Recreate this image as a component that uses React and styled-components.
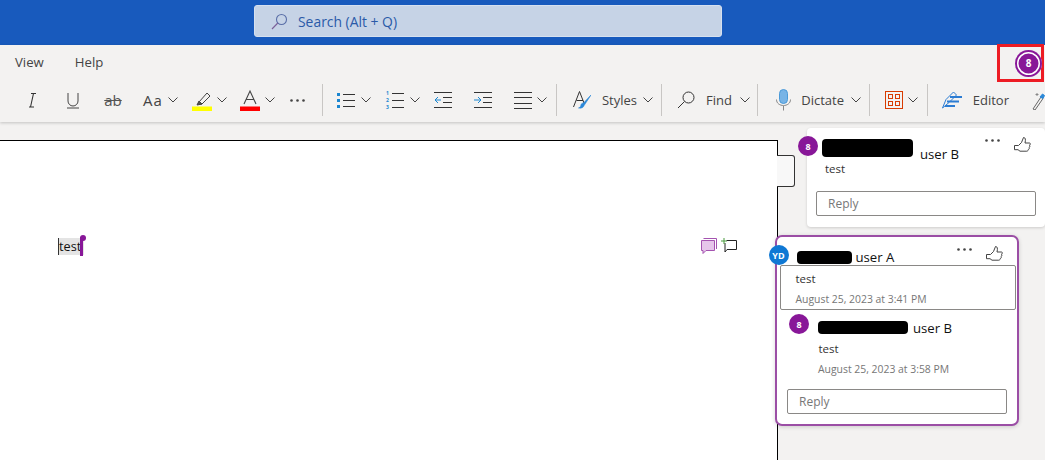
import React from "react";
import styled, { createGlobalStyle } from "styled-components";

const Global = createGlobalStyle`
  html, body { margin: 0; padding: 0; background: #f3f2f1; }
  body { font-family: "Open Sans", "Noto Sans", sans-serif; }
  * { box-sizing: border-box; }
`;
const Shell = styled.div`
  width: 1045px; height: 460px; overflow: hidden; display: flex; flex-direction: column;
  background: #f3f2f1; position: relative;
`;
const Header = styled.header`
  height: 45px; flex: none; background: #185abd; padding: 5px 0 0 254px;
`;
const SearchBox = styled.div`
  width: 468px; height: 32px; background: #c6d3e6; border: 1px solid #d6e0ef; border-radius: 3px;
  display: flex; align-items: center; gap: 10px; padding-left: 16px;
  color: #2a5aa8; font-size: 13.9px;
`;
const Ribbon = styled.div`
  flex: none; height: 77px; background: #f3f2f1; box-shadow: 0 1px 3px rgba(0,0,0,.2); position: relative; z-index: 2;
`;
const MenuRow = styled.nav`
  height: 33px; display: flex; align-items: center; gap: 31px; padding: 0 0 0 15px;
  font-size: 13.2px; color: #444;
`;
const Annotation = styled.div`
  position: absolute; left: 997px; top: -1px; width: 47px; height: 38px; border: 3px solid #ed1c24;
  display: flex; align-items: center; padding: 0 0 0 15px;
`;
const RingAvatar = styled.div`
  flex: none; width: 27px; height: 27px; border-radius: 50%; background: #881798; color: #fff;
  font-size: 10px; font-weight: 700; display: flex; align-items: center; justify-content: center;
  box-shadow: inset 0 0 0 2px #881798, inset 0 0 0 3.5px #fff;
`;
const Toolbar = styled.div`
  height: 44px; display: flex; align-items: center; padding: 0 0 0 12px; font-size: 13px; color: #444;
`;
const Tool = styled.div`
  flex: none; width: ${p => p.$w}px; height: 32px; display: flex; align-items: center;
  justify-content: ${p => p.$end ? "flex-end" : "center"};
  padding: 0 ${p => p.$pr ?? 0}px 0 ${p => p.$pl ?? 0}px;
  gap: ${p => p.$gap ?? 4}px; color: #444; white-space: nowrap;
`;
const CaseLabel = styled.span`
  font-size: 15px; letter-spacing: 1px;
`;
const StrikeLabel = styled.span`
  font-size: 15px; line-height: 18px; color: #555; text-decoration: line-through; text-decoration-thickness: 1px;
`;
const NumberedIcon = styled.div`
  position: relative; width: 18px; height: 21px; flex: none;
`;
const NumberCol = styled.div`
  width: 5px; display: flex; flex-direction: column; color: #1a86d0; font-size: 5px; font-weight: 700;
  & > div { height: 7px; line-height: 7px; }
`;
const NumberLines = styled.svg`
  position: absolute; left: 0; top: 0;
`;
const Sep = styled.div`
  flex: none; width: 1px; height: 32px; background: #c8c6c4; margin: 0 ${p => p.$r ?? 4}px 0 ${p => p.$l ?? 4}px;
`;
const Body = styled.main`
  flex: 1; min-height: 0; display: flex; align-items: flex-start; background: #f3f2f1; padding-top: 18px;
`;
const Page = styled.section`
  flex: none; width: 779px; height: 400px; margin-left: -1px; background: #fff; border: 1px solid #000; border-bottom: 0;
  padding: 95px 40px 0 58px;
`;
const DocLine = styled.div`
  display: flex; justify-content: space-between; align-items: center; height: 20px;
`;
const Selection = styled.span`
  position: relative; display: inline-block; height: 17px; width: 26px; background: #e4e4e4;
  border-left: 1px solid #333; font-size: 12.7px; line-height: 17px; color: #111;
`;
const Presence = styled.span`
  position: absolute; left: 21px; top: -1px; width: 3px; height: 19px; background: #881798;
  &::after { content: ""; position: absolute; left: 0; top: -2px; width: 6px; height: 6px; border-radius: 50%; background: #881798; }
`;
const Marks = styled.div`
  display: flex; gap: 4px; align-items: center; margin-top: 1px;
`;
const PageTab = styled.div`
  flex: none; width: 18px; height: 32px; margin: 15px 0 0 -1px; background: #f8f8f8; border: 1px solid #333; border-left: 0; border-radius: 0 3px 3px 0;
`;
const Pane = styled.aside`
  flex: 1; min-width: 0; margin-top: -12px; display: flex; flex-direction: column; align-items: flex-start; margin-left: -17px;
`;
const Card = styled.article`
  position: relative; width: 238px; height: 99px; margin-left: 29px; background: #fff; border-radius: 4px;
  box-shadow: 0 1px 3px rgba(0,0,0,.16); padding: 8px 9px 0 15px;
`;
const ActiveCard = styled.article`
  position: relative; width: 244px; height: 191px; margin: 8px 0 0 -3px; background: #fff; border: 2.5px solid #9b4ea5; border-radius: 7px;
  box-shadow: 0 1px 4px rgba(0,0,0,.16); padding: 8px 2px 0 1.5px;
`;
const Head = styled.div`
  display: flex; align-items: center; color: #000; font-size: 13.2px; height: 20px;
  padding-left: ${p => p.$p ?? 0}px; margin: ${p => p.$m ?? 0};
`;
const Avatar = styled.div`
  flex: none; width: 20px; height: 20px; border-radius: 50%; background: ${p => p.$bg ?? "#881798"}; color: #fff;
  font-size: 9px; font-weight: 700; display: flex; align-items: center; justify-content: center;
`;
const Redact = styled.span`
  flex: none; display: inline-block; width: ${p => p.$w}px; height: ${p => p.$h}px; background: #000; border-radius: 4px;
  margin: ${p => p.$m};
`;
const Name = styled.span`
  white-space: nowrap; color: #111; line-height: 16px; transform: translateY(${p => p.$y ?? 0}px);
`;
const Actions = styled.div`
  position: absolute; top: ${p => p.$t}px; right: ${p => p.$r}px; display: flex; align-items: flex-start; gap: 14px;
`;
const DotsSlot = styled.div`
  margin-top: 2px;
`;
const CommentText = styled.div`
  font-size: 11.5px; line-height: 16px; color: #333; padding-left: ${p => p.$p ?? 0}px; margin-top: ${p => p.$m ?? 0}px;
`;
const Stamp = styled.div`
  font-size: 10.4px; line-height: 14px; color: #767676; white-space: nowrap; padding-left: ${p => p.$p ?? 0}px; margin-top: ${p => p.$m ?? 0}px;
`;
const Thread = styled.div`
  margin: 0 0 0 1px; width: 236px; height: 45px; border: 1px solid #8a8886; border-radius: 2px; padding: 5px 0 0 15px;
`;
const ReplyBox = styled.div`
  width: 220px; height: 25px; border: 1px solid #8a8886; border-radius: 2px; background: #fff;
  display: flex; align-items: center; padding-left: 11px; font-size: 12px; color: #777;
  margin: ${p => p.$m};
`;

const S = ({ w = 18, h = 18, children }) => (
  <svg width={w} height={h} viewBox={`0 0 ${w} ${h}`} fill="none" stroke="#444" strokeWidth="1" style={{ flex: "none", display: "block" }}>{children}</svg>
);
const Chev = () => <S w={10} h={6}><path d="M.5.5 5 5 9.500.5" /></S>;
const Lines = ({ x1, x2, ys }) => ys.map(y => <line key={y} x1={x1} x2={x2} y1={y} y2={y} stroke="#333" />);
const Dots = () => <svg width="15" height="3" viewBox="0 0 15 3" style={{ display: "block" }}><g fill="#444"><circle cx="1.500" cy="1.500" r="1.300" /><circle cx="7.500" cy="1.500" r="1.300" /><circle cx="13.500" cy="1.500" r="1.300" /></g></svg>;
const Like = () => <S w={17} h={17}><path d="M.5 8.500h4l3-3 2-5c2 0 2.300 2 1.500 5.500h4.500c1.200 0 1.200 2-.2 2.200.8.400.8 2-.3 2.300.6.500.3 1.900-.7 2-.1.800-.6 1.700-1.500 1.700H6l-2-1.500H.5z" /></S>;

function Ribbonbar() {
  return (
    <Toolbar>
      <Tool $w={40}><S><path d="M6 16h5M8 2.500h5M10.500 2.500 7.500 16" stroke="#333" strokeWidth="1.100" /></S></Tool>
      <Tool $w={41}><S><path d="M4 2v8a5 5 0 0 0 10 0V2M3 17h12" /></S></Tool>
      <Tool $w={40}><StrikeLabel>ab</StrikeLabel></Tool>
      <Tool $w={49} $gap={5} $pl={6}><CaseLabel>Aa</CaseLabel><Chev /></Tool>
      <Tool $w={50} $gap={5} $pl={4}>
        <S w={20} h={22}>
          <path d="M7 13 15 4l3 3-8 8H7z" />
          <path d="M5 16l2-4 3 3z" fill="#555" />
          <rect x="0" y="17.500" width="20" height="5" fill="#ffff00" stroke="none" />
        </S><Chev />
      </Tool>
      <Tool $w={50} $gap={5}>
        <S w={20} h={22}>
          <path d="M4 15 10 2l6 13M6 10.500h8" strokeWidth="1.100" />
          <rect x="0" y="17.500" width="20" height="5" fill="#ff0000" stroke="none" />
        </S><Chev />
      </Tool>
      <Tool $w={30}><Dots /></Tool>
      <Sep $l={10} $r={6} />
      <Tool $w={50} $gap={6}>
        <S>
          <g fill="#1a86d0" stroke="none"><rect x="0" y="2" width="3" height="3" /><rect x="0" y="8" width="3" height="3" /><rect x="0" y="14" width="3" height="3" /></g>
          <Lines x1={6} x2={18} ys={[3.500, 9.500, 15.500]} />
        </S><Chev />
      </Tool>
      <Tool $w={48} $gap={6}>
        <NumberedIcon>
          <NumberCol><div>1</div><div>2</div><div>3</div></NumberCol>
          <NumberLines width="18" height="21" viewBox="0 0 18 21" fill="none"><Lines x1={6} x2={18} ys={[3.500, 10.500, 17.500]} /></NumberLines>
        </NumberedIcon><Chev />
      </Tool>
      <Tool $w={32}>
        <S>
          <Lines x1={0} x2={18} ys={[1.500, 16.500]} />
          <Lines x1={9} x2={18} ys={[6.500, 11.500]} />
          <path d="M7 9H1M4 6 1 9l3 3" stroke="#1a86d0" />
        </S>
      </Tool>
      <Tool $w={48}>
        <S>
          <Lines x1={0} x2={18} ys={[1.500, 16.500]} />
          <Lines x1={9} x2={18} ys={[6.500, 11.500]} />
          <path d="M0 9h6M4 6l3 3-3 3" stroke="#1a86d0" />
        </S>
      </Tool>
      <Tool $w={47} $gap={5}>
        <S><Lines x1={0} x2={18} ys={[1.500, 6.500, 12.500, 17.500]} /></S><Chev />
      </Tool>
      <Sep $l={2} $r={16} />
      <Tool $w={18}>
        <S w={18} h={20}>
          <path d="M.5 17 6.500 1.500 11 13M3.500 10.500h6.500" stroke="#333" />
          <path d="M18 5 10.500 13c-1.500 0-2.500 1-2.500 2-.3 1.500-1 2.500-2.500 3 3 .6 5-.5 5.600-2.500z" fill="#2b88d8" stroke="#2b88d8" strokeWidth=".6" />
        </S>
      </Tool>
      <Tool $w={70} $gap={6} $end $pr={8}><span>Styles</span><Chev /></Tool>
      <Sep $l={0} $r={15} />
      <Tool $w={18}>
        <S>
          <circle cx="11.500" cy="6.500" r="5.500" stroke="#333" />
          <path d="M7.500 10.500 1 17" stroke="#333" />
        </S>
      </Tool>
      <Tool $w={62} $gap={8} $end $pr={7}><span>Find</span><Chev /></Tool>
      <Sep $l={0} $r={17} />
      <Tool $w={16}>
        <S w={15} h={22}>
          <rect x="3.500" y=".5" width="8" height="14" rx="4" fill="#78b4e6" stroke="#4b9ad8" />
          <path d="M.5 10.500c0 8 14 8 14 0M7.500 17v4.500" stroke="#888" />
        </S>
      </Tool>
      <Tool $w={78} $gap={7} $end $pr={8}><span>Dictate</span><Chev /></Tool>
      <Sep $l={0} $r={15} />
      <Tool $w={18}>
        <S>
          <rect x=".5" y=".5" width="17" height="17" stroke="#d83b01" />
          <rect x="3.500" y="3.500" width="4" height="4" stroke="#d83b01" />
          <rect x="10.500" y="3.500" width="4" height="4" stroke="#d83b01" />
          <rect x="3.500" y="10.500" width="4" height="4" stroke="#d83b01" />
          <rect x="10.500" y="10.500" width="4" height="4" stroke="#d83b01" />
        </S>
      </Tool>
      <Tool $w={24} $end $pr={9}><Chev /></Tool>
      <Sep $l={0} $r={14} />
      <Tool $w={20}>
        <S w={20} h={18}>
          <path d="M.5 17 4 8.500 11.500 1l3 3L7 11.500z" stroke="#2b7cd3" />
          <path d="M8 6h12M5 10.500h12M3 15h10" stroke="#2b7cd3" strokeWidth="2" />
        </S>
      </Tool>
      <Tool $w={47} $end><span>Editor</span></Tool>
      <Tool $w={36} $end>
        <S w={13} h={20}>
          <path d="M1 19 9 7l2 1.500L3 20z" stroke="#666" />
          <path d="M8 7l2.500-3 2 1.500-1.500 3z" fill="#2b88d8" stroke="#2b88d8" />
          <path d="M5 3v3M3.500 4.500h3" stroke="#888" />
        </S>
      </Tool>
    </Toolbar>
  );
}

export default function App() {
  return (
    <>
      <Global />
      <Shell>
        <Header>
          <SearchBox>
            <svg width="17" height="17" viewBox="0 0 17 17" fill="none" stroke="#5a6fa8" strokeWidth="1.100" style={{ display: "block" }}>
              <circle cx="10.500" cy="6.500" r="5" />
              <path d="M6.800 10 1 16" stroke="#7a5f98" />
            </svg>
            <span>Search (Alt + Q)</span>
          </SearchBox>
        </Header>
        <Ribbon>
          <MenuRow><span>View</span><span>Help</span></MenuRow>
          <Annotation><RingAvatar>8</RingAvatar></Annotation>
          <Ribbonbar />
        </Ribbon>
        <Body>
          <Page>
            <DocLine>
              <Selection>test<Presence /></Selection>
              <Marks>
                <svg width="16" height="17" viewBox="0 0 16 17" style={{ display: "block" }}>
                  <path d="M2.500 .5H15.500V11" fill="none" stroke="#a453b0" />
                  <path d="M.5 2.500h13v10H5l-3 3v-3H.5z" fill="#e6c5ea" stroke="#a453b0" />
                </svg>
                <svg width="16" height="17" viewBox="0 0 16 17" style={{ display: "block" }} fill="none">
                  <path d="M5.500 2.500h10v9H6l-2 2.500v-9" stroke="#222" />
                  <path d="M3 0v6M0 3h6" stroke="#4a9b3f" />
                </svg>
              </Marks>
            </DocLine>
          </Page>
          <PageTab />
          <Pane>
            <Card>
              <Head $m="0 0 0 -24px">
                <Avatar>8</Avatar>
                <Redact $w={91} $h={18} $m="3px 7px 0 4px" />
                <Name $y={8}>user B</Name>
              </Head>
              <CommentText $p={3} $m={5}>test</CommentText>
              <ReplyBox $m="14px 0 0 -6px">Reply</ReplyBox>
              <Actions $t={9} $r={14}><DotsSlot><Dots /></DotsSlot><Like /></Actions>
            </Card>
            <ActiveCard>
              <Head $m="0 0 0 -10px">
                <Avatar $bg="#0f78d4">YD</Avatar>
                <Redact $w={55} $h={13} $m="4px 4px 0 8px" />
                <Name $y={2}>user A</Name>
              </Head>
              <Thread>
                <CommentText>test</CommentText>
                <Stamp $m={5}>August 25, 2023 at 3:41 PM</Stamp>
              </Thread>
              <Head $p={10.500} $m="4px 0 0">
                <Avatar>8</Avatar>
                <Redact $w={90} $h={13} $m="6px 5px 0 9px" />
                <Name $y={4}>user B</Name>
              </Head>
              <CommentText $p={40} $m={7}>test</CommentText>
              <Stamp $p={39.500} $m={5}>August 25, 2023 at 3:58 PM</Stamp>
              <ReplyBox $m="13px 0 0 8.500px">Reply</ReplyBox>
              <Actions $t={8.500} $r={14}><DotsSlot><Dots /></DotsSlot><Like /></Actions>
            </ActiveCard>
          </Pane>
        </Body>
      </Shell>
    </>
  );
}
